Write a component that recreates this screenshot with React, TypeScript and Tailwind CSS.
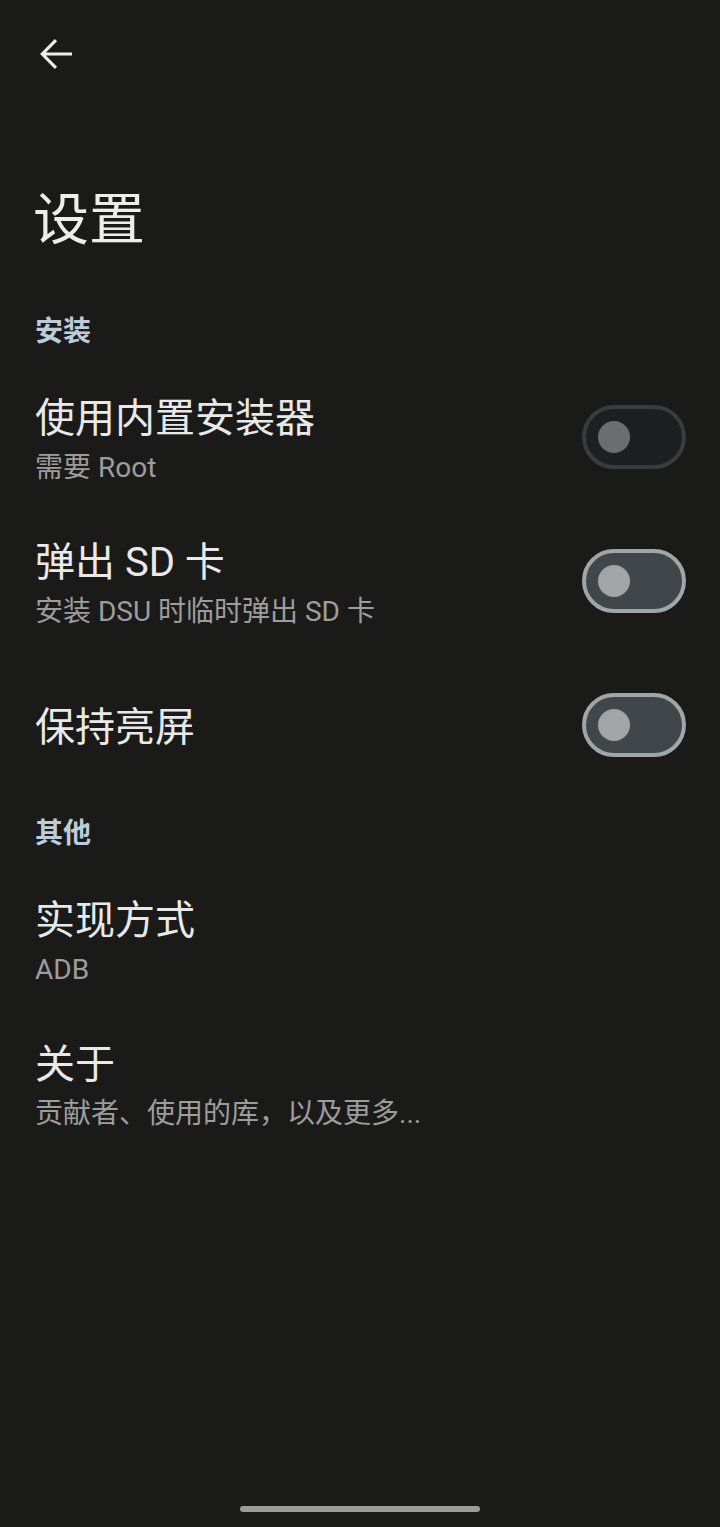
import { ReactNode } from "react";

const font = { fontFamily: 'Roboto, "Noto Sans CJK SC", sans-serif' };

function Toggle({ disabled }: { disabled?: boolean }) {
  return (
    <div
      className={
        "w-[104px] h-[64px] mb-[6px] rounded-full border-4 flex items-center pl-[12px] shrink-0 " +
        (disabled ? "border-[#393c3d] bg-[#1d2022]" : "border-[#a0a5a8] bg-[#41464a]")
      }
    >
      <div className={"w-8 h-8 rounded-full " + (disabled ? "bg-[#6b6d6f]" : "bg-[#a1a5a8]")} />
    </div>
  );
}

function Row({ title, summary, right }: { title: string; summary?: string; right?: ReactNode }) {
  return (
    <div className="min-h-[144px] flex items-center pl-[35px] pr-[34px]">
      <div className="flex-1 flex flex-col">
        <div className="text-[40px] leading-[40px] text-[#e9e9e9]">{title}</div>
        {summary && <div className="mt-[15px] text-[28px] leading-[28px] text-[#9d9d9d]">{summary}</div>}
      </div>
      {right}
    </div>
  );
}

function SectionHeader({ label }: { label: string }) {
  return (
    <div className="pl-[35px] pt-5 pb-[22px] text-[28px] leading-[28px] font-bold text-[#bccdd9]">{label}</div>
  );
}

export default function App() {
  return (
    <div className="min-h-[1527px] bg-[#1a1b19] flex flex-col" style={font}>
      {/* Top bar */}
      <div className="pl-8 pt-[30px]">
        <svg width="48" height="48" viewBox="0 0 24 24" className="text-[#ececec]">
          <path
            fill="currentColor"
            d="M20 11.2H6.95l5.6-5.6-1.13-1.13L4.03 12l7.39 7.53 1.13-1.13-5.6-5.6H20z"
          />
        </svg>
      </div>

      <h1 className="pl-[33px] mt-[114px] mb-[50px] text-[56px] leading-[56px] text-[#ededed]">设置</h1>

      <SectionHeader label="安装" />
      <Row title="使用内置安装器" summary="需要 Root" right={<Toggle disabled />} />
      <Row title="弹出 SD 卡" summary="安装 DSU 时临时弹出 SD 卡" right={<Toggle />} />
      <Row title="保持亮屏" right={<Toggle />} />

      <SectionHeader label="其他" />
      <Row title="实现方式" summary="ADB" />
      <Row title="关于" summary="贡献者、使用的库，以及更多..." />

      {/* Gesture bar */}
      <div className="mt-auto flex justify-center pb-[15px]">
        <div className="w-[240px] h-[6px] rounded-full bg-[#9c9c9c]" />
      </div>
    </div>
  );
}
